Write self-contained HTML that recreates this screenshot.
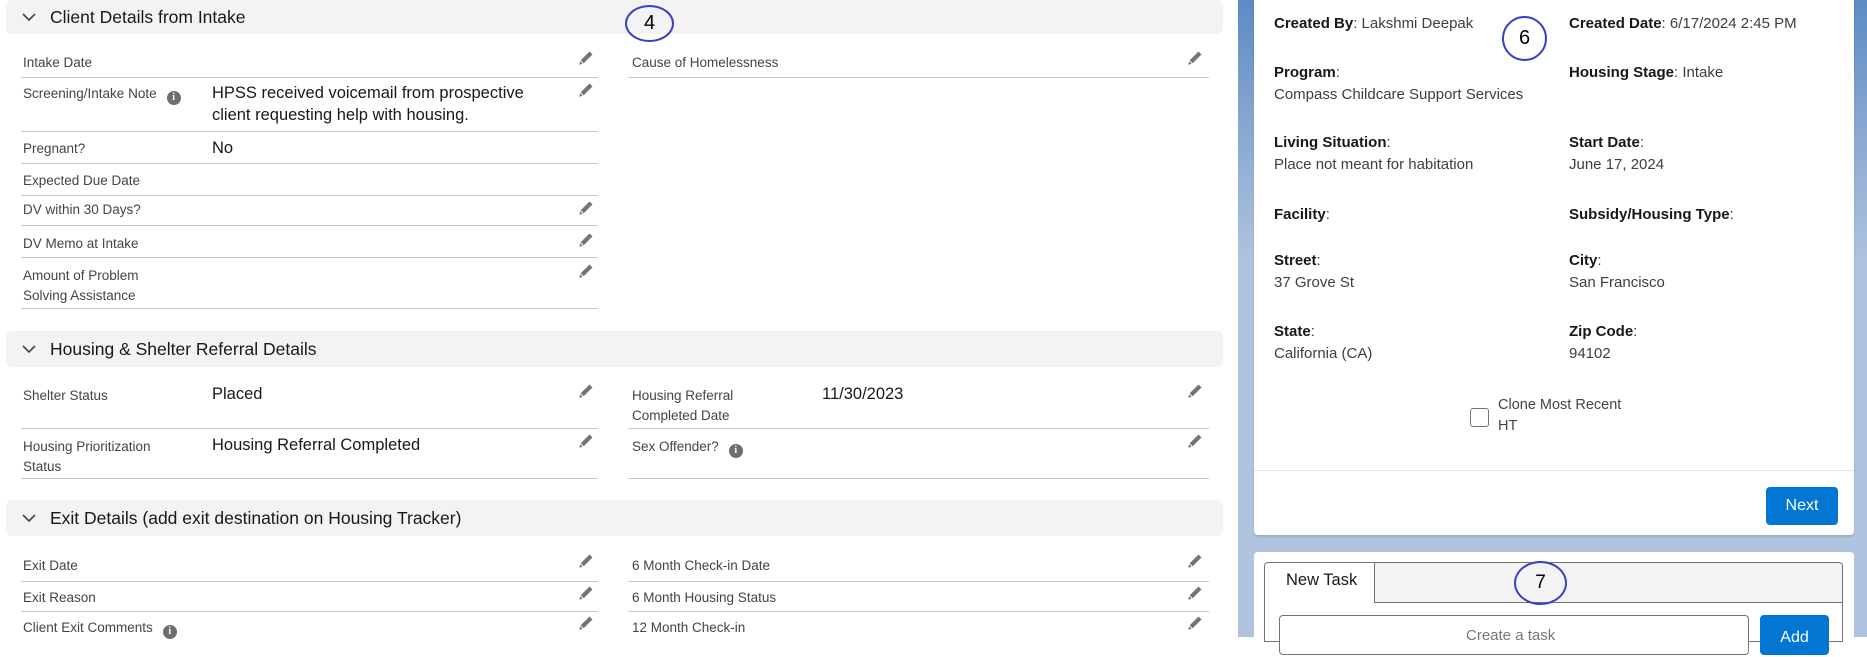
<!DOCTYPE html>
<html><head><meta charset="utf-8"><style>
*{margin:0;padding:0;box-sizing:border-box}
body{width:1867px;height:637px;overflow:hidden;background:#fff;font-family:"Liberation Sans",sans-serif;position:relative;color:#181818}
.a{position:absolute;white-space:nowrap}
.hdr{position:absolute;left:6px;width:1217px;background:#f3f3f3;border-radius:6px}
.hdr .t{position:absolute;left:44px;font-size:17.5px;color:#181818}
.hdr svg{position:absolute;left:15px}
.lb{position:absolute;font-size:13.5px;color:#444;line-height:20px}
.vl{position:absolute;font-size:16.5px;color:#181818;line-height:22px}
.ln{position:absolute;height:1px;background:#c9c9c9}
.pen{position:absolute;width:16px;height:16px}
.info{display:inline-block;width:14px;height:14px;border-radius:50%;background:#706e6b;color:#fff;font-size:10px;font-weight:bold;text-align:center;line-height:14px;vertical-align:-2px;margin-left:10px;font-family:"Liberation Serif",serif}
.circ{position:absolute;border:2px solid #3a3fc9;border-radius:50%;font-size:20px;text-align:center;color:#000}
.rk{position:absolute;font-size:15px;color:#3e3e3c;line-height:22px}
.rk b{color:#181818}
</style></head><body>

<svg width="0" height="0" style="position:absolute"><defs>
<symbol id="p" viewBox="0 0 16 16"><path d="M11.5 1.5l3 3-8.8 8.8-3-3z" fill="#747474"/><path d="M2.2 11.3l2.5 2.5-3.5 1z" fill="#747474"/></symbol>
<symbol id="c" viewBox="0 0 16 16"><path d="M2 5l6 6 6-6" fill="none" stroke="#444" stroke-width="1.6"/></symbol>
</defs></svg>

<div class="hdr" style="top:0;height:34px"><svg width="16" height="16" style="top:9px"><use href="#c"/></svg><div class="t" style="top:7px">Client Details from Intake</div></div>

<div class="lb" style="left:23px;top:53px">Intake Date</div>
<svg class="pen" style="left:578px;top:50px"><use href="#p"/></svg>
<div class="ln" style="left:21px;top:77px;width:577px"></div>

<div class="lb" style="left:23px;top:84px">Screening/Intake Note<span class="info">i</span></div>
<div class="vl" style="left:212px;top:82px">HPSS received voicemail from prospective<br>client requesting help with housing.</div>
<svg class="pen" style="left:578px;top:82px"><use href="#p"/></svg>
<div class="ln" style="left:21px;top:131px;width:577px"></div>

<div class="lb" style="left:23px;top:139px">Pregnant?</div>
<div class="vl" style="left:212px;top:137px">No</div>
<div class="ln" style="left:21px;top:163px;width:577px"></div>

<div class="lb" style="left:23px;top:171px">Expected Due Date</div>
<div class="ln" style="left:21px;top:195px;width:577px"></div>

<div class="lb" style="left:23px;top:200px">DV within 30 Days?</div>
<svg class="pen" style="left:578px;top:200px"><use href="#p"/></svg>
<div class="ln" style="left:21px;top:225px;width:577px"></div>

<div class="lb" style="left:23px;top:234px">DV Memo at Intake</div>
<svg class="pen" style="left:578px;top:232px"><use href="#p"/></svg>
<div class="ln" style="left:21px;top:257px;width:577px"></div>

<div class="lb" style="left:23px;top:266px">Amount of Problem<br>Solving Assistance</div>
<svg class="pen" style="left:578px;top:263px"><use href="#p"/></svg>
<div class="ln" style="left:21px;top:308px;width:577px"></div>

<div class="lb" style="left:632px;top:53px">Cause of Homelessness</div>
<svg class="pen" style="left:1187px;top:50px"><use href="#p"/></svg>
<div class="ln" style="left:628px;top:77px;width:581px"></div>

<div class="circ" style="left:625px;top:5px;width:49px;height:37px;line-height:33px">4</div>

<div class="hdr" style="top:331px;height:36px"><svg width="16" height="16" style="top:10px"><use href="#c"/></svg><div class="t" style="top:8px">Housing &amp; Shelter Referral Details</div></div>

<div class="lb" style="left:23px;top:386px">Shelter Status</div>
<div class="vl" style="left:212px;top:383px">Placed</div>
<svg class="pen" style="left:578px;top:383px"><use href="#p"/></svg>
<div class="ln" style="left:21px;top:428px;width:577px"></div>

<div class="lb" style="left:23px;top:437px">Housing Prioritization<br>Status</div>
<div class="vl" style="left:212px;top:434px">Housing Referral Completed</div>
<svg class="pen" style="left:578px;top:433px"><use href="#p"/></svg>
<div class="ln" style="left:21px;top:478px;width:577px"></div>

<div class="lb" style="left:632px;top:386px">Housing Referral<br>Completed Date</div>
<div class="vl" style="left:822px;top:383px">11/30/2023</div>
<svg class="pen" style="left:1187px;top:383px"><use href="#p"/></svg>
<div class="ln" style="left:628px;top:428px;width:581px"></div>

<div class="lb" style="left:632px;top:437px">Sex Offender?<span class="info">i</span></div>
<svg class="pen" style="left:1187px;top:433px"><use href="#p"/></svg>
<div class="ln" style="left:628px;top:478px;width:581px"></div>

<div class="hdr" style="top:500px;height:36px"><svg width="16" height="16" style="top:10px"><use href="#c"/></svg><div class="t" style="top:8px">Exit Details (add exit destination on Housing Tracker)</div></div>

<div class="lb" style="left:23px;top:556px">Exit Date</div>
<svg class="pen" style="left:578px;top:553px"><use href="#p"/></svg>
<div class="ln" style="left:21px;top:581px;width:577px"></div>
<div class="lb" style="left:23px;top:588px">Exit Reason</div>
<svg class="pen" style="left:578px;top:585px"><use href="#p"/></svg>
<div class="ln" style="left:21px;top:611px;width:577px"></div>
<div class="lb" style="left:23px;top:618px">Client Exit Comments<span class="info">i</span></div>
<svg class="pen" style="left:578px;top:615px"><use href="#p"/></svg>

<div class="lb" style="left:632px;top:556px">6 Month Check-in Date</div>
<svg class="pen" style="left:1187px;top:553px"><use href="#p"/></svg>
<div class="ln" style="left:628px;top:581px;width:581px"></div>
<div class="lb" style="left:632px;top:588px">6 Month Housing Status</div>
<svg class="pen" style="left:1187px;top:585px"><use href="#p"/></svg>
<div class="ln" style="left:628px;top:611px;width:581px"></div>
<div class="lb" style="left:632px;top:618px">12 Month Check-in</div>
<svg class="pen" style="left:1187px;top:615px"><use href="#p"/></svg>

<div class="a" style="left:1238px;top:0;width:629px;height:637px;background:linear-gradient(180deg,#5b8bc4 0px,#86a6d0 120px,#aec3de 260px,#b0c4df 637px)"></div>
<div class="a" style="left:1254px;top:0;width:600px;height:535px;background:#fff;border-radius:0 0 4px 4px;box-shadow:0 2px 2px rgba(0,0,0,.12)"></div>

<div class="rk" style="left:1274px;top:13px"><b>Created By</b>: Lakshmi Deepak</div>
<div class="rk" style="left:1274px;top:62px"><b>Program</b>:<br>Compass Childcare Support Services</div>
<div class="rk" style="left:1274px;top:132px"><b>Living Situation</b>:<br>Place not meant for habitation</div>
<div class="rk" style="left:1274px;top:204px"><b>Facility</b>:</div>
<div class="rk" style="left:1274px;top:250px"><b>Street</b>:<br>37 Grove St</div>
<div class="rk" style="left:1274px;top:321px"><b>State</b>:<br>California (CA)</div>

<div class="rk" style="left:1569px;top:13px"><b>Created Date</b>: 6/17/2024 2:45 PM</div>
<div class="rk" style="left:1569px;top:62px"><b>Housing Stage</b>: Intake</div>
<div class="rk" style="left:1569px;top:132px"><b>Start Date</b>:<br>June 17, 2024</div>
<div class="rk" style="left:1569px;top:204px"><b>Subsidy/Housing Type</b>:</div>
<div class="rk" style="left:1569px;top:250px"><b>City</b>:<br>San Francisco</div>
<div class="rk" style="left:1569px;top:321px"><b>Zip Code</b>:<br>94102</div>

<div class="a" style="left:1470px;top:408px;width:19px;height:19px;border:1px solid #747474;border-radius:3px;background:#fff"></div>
<div class="a" style="left:1498px;top:395px;font-size:14.5px;color:#444;line-height:21px">Clone Most Recent<br>HT</div>

<div class="a" style="left:1254px;top:470px;width:600px;height:1px;background:#e5e5e5"></div>
<div class="a" style="left:1766px;top:487px;width:72px;height:38px;background:#0176d3;border-radius:4px;color:#fff;font-size:16px;text-align:center;line-height:38px">Next</div>

<div class="circ" style="left:1502px;top:16px;width:45px;height:45px;line-height:41px">6</div>

<div class="a" style="left:1254px;top:552px;width:600px;height:90px;background:#fff;border-radius:4px"></div>
<div class="a" style="left:1264px;top:562px;width:579px;height:80px;border:1px solid #747474;border-radius:4px 4px 0 0;background:#fff"></div>
<div class="a" style="left:1374px;top:563px;width:468px;height:40px;background:#f3f3f3;border-left:1px solid #747474;border-bottom:1px solid #747474;border-radius:0 4px 0 0"></div>
<div class="a" style="left:1286px;top:571px;font-size:16.5px;color:#181818">New Task</div>
<div class="a" style="left:1279px;top:615px;width:470px;height:40px;border:1px solid #747474;border-radius:4px;background:#fff"></div>
<div class="a" style="left:1466px;top:627px;font-size:15px;color:#777">Create a task</div>
<div class="a" style="left:1760px;top:615px;width:69px;height:40px;background:#0176d3;border-radius:4px;color:#fff;font-size:16px;text-align:center;line-height:38px;padding-top:4px">Add</div>
<div class="circ" style="left:1514px;top:561px;width:53px;height:44px;line-height:40px;font-size:19px">7</div>

</body></html>
